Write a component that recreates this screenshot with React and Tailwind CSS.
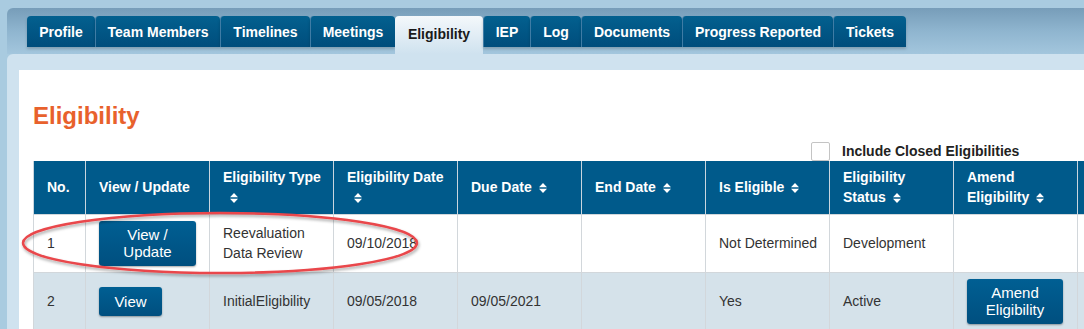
import React from 'react';

const tabs = [
  { label: 'Profile', w: 'w-[68px]' },
  { label: 'Team Members', w: 'w-[125px]' },
  { label: 'Timelines', w: 'w-[90px]' },
  { label: 'Meetings', w: 'w-[85px]' },
  { label: 'Eligibility', w: 'w-[88px]', active: true },
  { label: 'IEP', w: 'w-[47px]' },
  { label: 'Log', w: 'w-[51px]' },
  { label: 'Documents', w: 'w-[101px]' },
  { label: 'Progress Reported', w: 'w-[151px]' },
  { label: 'Tickets', w: 'w-[73px]' },
];

function SortIcon() {
  return (
    <svg width="8" height="10" viewBox="0 0 8 10" className="inline-block ml-[7px] align-[-1px]">
      <path d="M0 4.2 L4 0 L8 4.2 Z" fill="#fff" />
      <path d="M0 5.8 L8 5.8 L4 10 Z" fill="#fff" />
    </svg>
  );
}

function Btn({ children, className }) {
  return (
    <button
      className={
        'rounded-[3px] bg-gradient-to-b from-[#005f93] to-[#004f7f] text-white text-[15px] leading-[17px] shadow-[0_1px_2px_rgba(0,0,0,0.35)] ' +
        className
      }
    >
      {children}
    </button>
  );
}

export default function App() {
  const th =
    'border-x border-[#c9d5de] text-left align-middle pl-[13px] pr-0 whitespace-nowrap text-[14px] font-bold text-white leading-5';
  const td =
    'border border-[#d2d7db] align-middle pl-[13px] pr-0 whitespace-nowrap text-[14px] text-[#333] leading-5';

  return (
    <div
      className="relative w-[1084px] h-[329px] overflow-hidden bg-[#a9cbe0] pt-2 pl-[7px]"
      style={{ fontFamily: '"Liberation Sans", Arial, sans-serif' }}
    >
      <div className="h-[46px] rounded-tl-[6px] bg-gradient-to-b from-[#779db9] via-[#8fb5cf] to-[#a3c6dd] pl-5 pt-2 flex items-start">
        {tabs.map((t) =>
          t.active ? (
            <div
              key={t.label}
              className={`${t.w} h-[38px] rounded-t-[4px] bg-gradient-to-b from-[#f4f8fb] to-[#cfe2ef] text-[#1a1a1a] text-[14px] font-bold flex justify-center pt-[8px]`}
            >
              {t.label}
            </div>
          ) : (
            <div
              key={t.label}
              className={`${t.w} h-[31px] rounded-t-[4px] border-l border-[#3f7ca5] first:border-l-0 bg-gradient-to-b from-[#03608f] to-[#004d7c] text-white text-[14px] font-bold flex items-center justify-center pt-[2px] shadow-[0_2px_3px_rgba(0,0,0,0.18)]`}
            >
              {t.label}
            </div>
          )
        )}
      </div>

      <div className="rounded-tl-[6px] bg-[#cfe2ef] pl-3 pt-4">
        <div className="bg-white pl-[14px] pt-[32px] h-[300px]">
          <h1 className="text-[24px] leading-[28px] font-bold text-[#e8612c]">Eligibility</h1>
          <div className="mt-[12px] ml-[778px] flex items-center gap-3 h-[19px]">
            <span className="w-[19px] h-[19px] border border-[#c4c4c4] rounded-[2px] bg-white shrink-0" />
            <span className="text-[14px] font-bold text-[#222] whitespace-nowrap">Include Closed Eligibilities</span>
          </div>
          <table className="table-fixed border-collapse w-[1168px]">
            <colgroup>
              <col className="w-[52px]" />
              <col className="w-[124px]" />
              <col className="w-[124px]" />
              <col className="w-[124px]" />
              <col className="w-[124px]" />
              <col className="w-[124px]" />
              <col className="w-[124px]" />
              <col className="w-[124px]" />
              <col className="w-[124px]" />
              <col className="w-[124px]" />
            </colgroup>
            <thead>
              <tr className="bg-[#005a8b] h-[53px]">
                <th className={th}>No.</th>
                <th className={th}>View / Update</th>
                <th className={th}>
                  Eligibility Type
                  <br />
                  <SortIcon />
                </th>
                <th className={th}>
                  Eligibility Date
                  <br />
                  <SortIcon />
                </th>
                <th className={th}>
                  Due Date
                  <SortIcon />
                </th>
                <th className={th}>
                  End Date
                  <SortIcon />
                </th>
                <th className={th}>
                  Is Eligible
                  <SortIcon />
                </th>
                <th className={th}>
                  Eligibility
                  <br />
                  Status
                  <SortIcon />
                </th>
                <th className={th}>
                  Amend
                  <br />
                  Eligibility
                  <SortIcon />
                </th>
                <th className={th}></th>
              </tr>
            </thead>
            <tbody>
              <tr className="bg-white h-[58px]">
                <td className={td}>1</td>
                <td className={td}>
                  <Btn className="w-[97px] h-[45px]">
                    View /<br />
                    Update
                  </Btn>
                </td>
                <td className={td}>
                  Reevaluation
                  <br />
                  Data Review
                </td>
                <td className={td}>09/10/2018</td>
                <td className={td}></td>
                <td className={td}></td>
                <td className={td}>Not Determined</td>
                <td className={td}>Development</td>
                <td className={td}></td>
                <td className={td}></td>
              </tr>
              <tr className="bg-[#d5e2ea] h-[58px]">
                <td className={td}>2</td>
                <td className={td}>
                  <Btn className="w-[63px] h-[29px]">View</Btn>
                </td>
                <td className={td}>InitialEligibility</td>
                <td className={td}>09/05/2018</td>
                <td className={td}>09/05/2021</td>
                <td className={td}></td>
                <td className={td}>Yes</td>
                <td className={td}>Active</td>
                <td className={td}>
                  <Btn className="w-[96px] h-[45px]">
                    Amend
                    <br />
                    Eligibility
                  </Btn>
                </td>
                <td className={td}></td>
              </tr>
            </tbody>
          </table>
        </div>
      </div>

      <svg className="absolute left-0 top-0 pointer-events-none" width="1084" height="329">
        <defs>
          <filter id="sh" x="-10%" y="-30%" width="120%" height="160%">
            <feDropShadow dx="1" dy="2" stdDeviation="1.5" floodColor="#000" floodOpacity="0.35" />
          </filter>
        </defs>
        <ellipse cx="220" cy="243" rx="197" ry="30" fill="none" stroke="#e9474b" strokeWidth="2.5" filter="url(#sh)" />
      </svg>
    </div>
  );
}
